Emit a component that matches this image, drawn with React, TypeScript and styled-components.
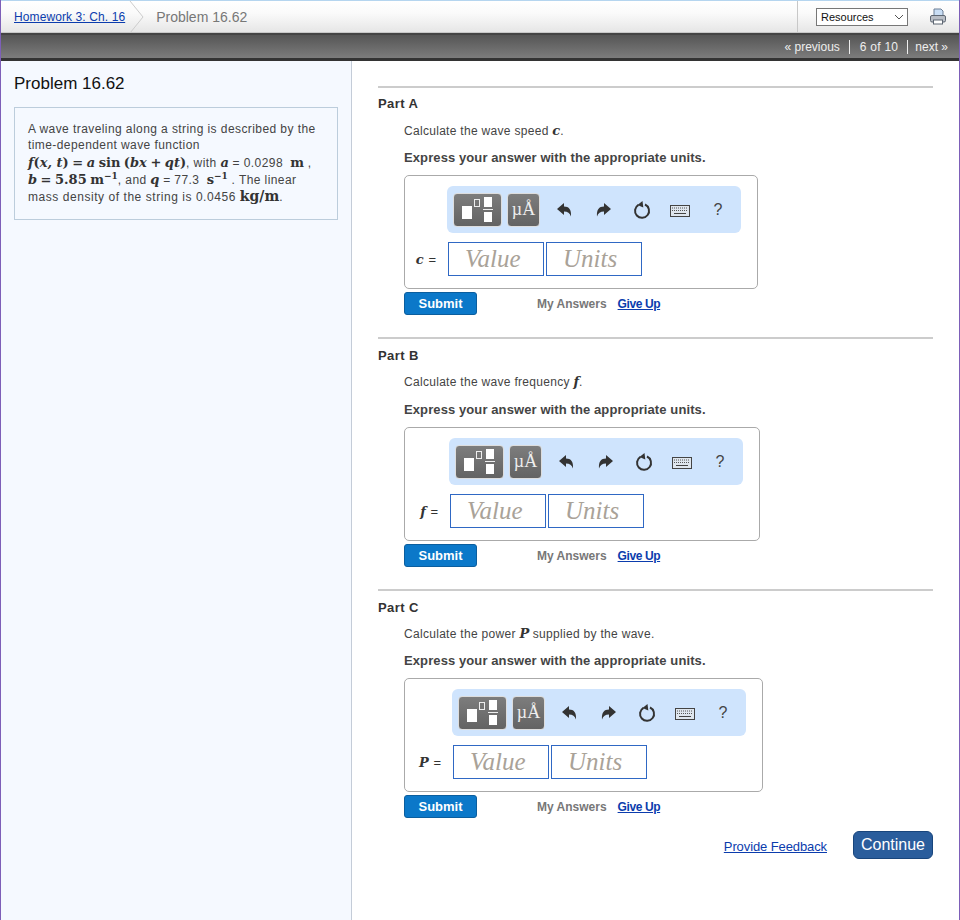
import styled, { createGlobalStyle } from 'styled-components';

const GlobalStyle = createGlobalStyle`
  html, body {
    margin: 0;
    padding: 0;
    background: #fff;
  }
  body {
    font-family: "Liberation Sans", Arial, sans-serif;
    font-size: 12px;
    color: #333;
  }
`;

const Page = styled.div`
  box-sizing: border-box;
  width: 960px;
  height: 920px;
  display: flex;
  flex-direction: column;
  border-left: 1px solid #7d5fb8;
  border-right: 1px solid #7d5fb8;
  overflow: hidden;
`;

const Header = styled.header`
  box-sizing: border-box;
  height: 33px;
  display: flex;
  align-items: stretch;
  border-top: 1px solid #b5d5ef;
  background: linear-gradient(#ffffff, #fafafa 40%, #e6e6e6);
  border-bottom: 1px solid #c8c8c8;
`;

const Crumbs = styled.div`
  flex: 1;
  display: flex;
  align-items: center;
  padding-left: 13px;
`;

const CrumbLink = styled.a`
  color: #0b3cad;
  text-decoration: underline;
  font-size: 12px;
  letter-spacing: 0.1px;
`;

const Chevron = styled.svg`
  width: 16px;
  height: 32px;
  margin-left: 4px;
`;

const CrumbCurrent = styled.span`
  margin-left: 11px;
  font-size: 14px;
  color: #777;
`;

const Tools = styled.div`
  width: 162px;
  display: flex;
  align-items: center;
  border-left: 1px solid #c8c8c8;
  padding-left: 18px;
  box-sizing: border-box;
`;

const ResourceSelect = styled.div`
  box-sizing: border-box;
  width: 92px;
  height: 18px;
  display: flex;
  align-items: center;
  justify-content: space-between;
  padding: 0 3px 0 4px;
  background: #fff;
  border: 1px solid #777;
  font-size: 11px;
  color: #111;
`;

const PrinterIcon = styled.svg`
  width: 18px;
  height: 18px;
  margin-left: 21px;
`;

const NavBar = styled.nav`
  box-sizing: border-box;
  height: 28px;
  display: flex;
  align-items: center;
  justify-content: flex-end;
  padding-right: 11px;
  background: linear-gradient(#555, #7c7c7c);
  border-top: 2px solid #444;
  border-bottom: 3px solid #333;
  color: #eee;
  font-size: 12px;
`;

const NavItem = styled.span<{ $divided?: boolean }>`
  padding: 0 9px 0 10px;
  line-height: 14px;
  border-left: ${(props) => (props.$divided ? '1px solid #eee' : 'none')};
  &:last-child {
    padding-right: 0;
    padding-left: 7px;
  }
`;

const NavCount = styled(NavItem)`
  padding-right: 9px;
  letter-spacing: 0.25px;
`;

const Body = styled.div`
  flex: 1;
  display: flex;
  min-height: 0;
`;

const Sidebar = styled.aside`
  box-sizing: border-box;
  width: 351px;
  padding: 13px 13px 0;
  background: #f5f9ff;
  border-right: 1px solid #c4ccd8;
`;

const SidebarTitle = styled.h1`
  margin: 0 0 13px;
  font-size: 17px;
  line-height: 20px;
  font-weight: 400;
  color: #111;
`;

const IntroBox = styled.div`
  box-sizing: border-box;
  width: 324px;
  height: 113px;
  padding: 13px 13px 0;
  border: 1px solid #bccddc;
  font-size: 12px;
  letter-spacing: 0.42px;
  color: #444;
`;

const IntroLine = styled.div<{ $compact?: boolean }>`
  white-space: nowrap;
  height: ${(props) => (props.$compact ? '16px' : '17px')};
  line-height: ${(props) => (props.$compact ? '16px' : '17px')};
`;

const FormulaLine = styled(IntroLine)`
  margin-top: 1px;
`;

const MassLine = styled(IntroLine)`
  letter-spacing: 0.55px;
`;

const Math = styled.span`
  font-family: "DejaVu Serif", "Liberation Serif", serif;
  font-weight: 700;
  font-size: 13px;
  letter-spacing: 0;
  word-spacing: -1px;
  color: #333;
`;

const BigUnit = styled(Math)`
  font-size: 14px;
`;

const MathVar = styled.i`
  font-family: "DejaVu Serif", "Liberation Serif", serif;
  font-weight: 700;
  font-size: 13px;
  letter-spacing: 0;
  color: #333;
`;

const Sup = styled.sup`
  font-size: 9px;
  line-height: 0;
`;

const Main = styled.main`
  flex: 1;
  box-sizing: border-box;
  padding: 25px 26px 0 26px;
`;

const Part = styled.section`
  border-top: 2px solid #ccc;
  padding-bottom: 22px;
`;

const PartTitle = styled.h2`
  margin: 8px 0 0;
  font-size: 13px;
  line-height: 16px;
  font-weight: 700;
  letter-spacing: 0.4px;
  color: #333;
  section + section & {
    margin: 9px 0 -1px;
  }
`;

const PartBody = styled.div`
  padding-left: 26px;
`;

const Prompt = styled.p<{ $tall?: boolean }>`
  margin: 11px 0 0;
  height: ${(props) => (props.$tall ? '17px' : '16px')};
  line-height: 16px;
  font-size: 12px;
  letter-spacing: 0.3px;
  color: #444;
`;

const Instruction = styled.p`
  margin: 11px 0 0;
  font-size: 13px;
  line-height: 16px;
  font-weight: 700;
  letter-spacing: 0.1px;
  color: #444;
`;

const AnswerBox = styled.div`
  box-sizing: border-box;
  margin-top: 9px;
  display: inline-grid;
  grid-template-columns: auto auto;
  column-gap: 12px;
  row-gap: 9px;
  align-items: center;
  padding: 10px 16px 12px 10px;
  height: 114px;
  border: 1px solid #aaa;
  border-radius: 5px;
  vertical-align: top;
`;

const Toolbar = styled.div`
  grid-column: 2;
  box-sizing: border-box;
  width: 294px;
  height: 47px;
  margin-left: -1px;
  display: flex;
  align-items: center;
  padding-left: 6px;
  background: #cfe4fd;
  border-radius: 6px;
`;

const ToolButton = styled.div<{ $wide?: boolean }>`
  box-sizing: border-box;
  width: ${(props) => (props.$wide ? '49px' : '33px')};
  height: 34px;
  margin-right: 5px;
  display: flex;
  align-items: center;
  justify-content: center;
  border: 1px solid #ddd;
  border-radius: 4px;
  background: linear-gradient(#7d7d7d, #636363);
  color: #eee;
  font-family: "Liberation Serif", serif;
  font-size: 18px;
`;

const ToolIcon = styled.svg`
  width: 38px;
  height: 20px;
  color: #333;
`;

const RedoIcon = styled(ToolIcon)`
  margin-left: 2px;
`;

const Help = styled.span`
  width: 38px;
  text-align: center;
  font-size: 16px;
  color: #444;
`;

const FieldLabel = styled.div<{ $width: number }>`
  width: ${(props) => props.$width}px;
  text-align: right;
  font-size: 13px;
  word-spacing: 1px;
  color: #333;
  white-space: nowrap;
`;

const FieldRow = styled.div`
  display: flex;
  gap: 2px;
`;

const Field = styled.div`
  box-sizing: border-box;
  width: 96px;
  height: 34px;
  padding-left: 16px;
  border: 1px solid #2f68c4;
  font-family: "Liberation Serif", serif;
  font-style: italic;
  font-size: 25px;
  line-height: 32px;
  color: #a9a298;
`;

const Actions = styled.div`
  margin-top: 3px;
  display: flex;
  align-items: center;
`;

const SubmitButton = styled.button`
  box-sizing: border-box;
  width: 73px;
  height: 23px;
  padding: 0;
  background: #0b78c9;
  border: 1px solid #0b5e9e;
  border-radius: 3px;
  color: #fff;
  font-family: inherit;
  font-size: 13px;
  font-weight: 700;
`;

const MyAnswers = styled.span`
  margin-left: 60px;
  font-size: 12px;
  font-weight: 700;
  color: #777;
`;

const GiveUp = styled.a`
  margin-left: 11px;
  font-size: 12px;
  font-weight: 700;
  letter-spacing: -0.4px;
  color: #0b3cad;
  text-decoration: underline;
`;

const Footer = styled.div`
  margin-top: -9px;
  display: flex;
  justify-content: flex-end;
  align-items: center;
  gap: 26px;
`;

const Feedback = styled.a`
  margin-top: 2px;
  font-size: 13px;
  letter-spacing: -0.1px;
  color: #0b3cad;
  text-decoration: underline;
`;

const ContinueButton = styled.button`
  box-sizing: border-box;
  width: 80px;
  height: 28px;
  padding: 0;
  background: #2a5d9c;
  border: 1px solid #18457c;
  border-radius: 6px;
  color: #fff;
  font-family: inherit;
  font-size: 16px;
`;

function Printer() {
  return (
    <PrinterIcon viewBox="0 0 18 18">
      <path d="M5 1h7l2 2v5H5z" fill="#c9def5" stroke="#6d7f96" />
      <rect x="1.5" y="7.5" width="15" height="6.5" rx="1.5" fill="#b9bec6" stroke="#5d6672" />
      <rect x="4.5" y="12" width="9" height="4" fill="#fff" stroke="#5d6672" />
    </PrinterIcon>
  );
}

function Template() {
  return (
    <svg width="31" height="25" viewBox="0 0 31 25">
      <rect x="0" y="9" width="10" height="13" fill="#fff" />
      <rect x="12.500" y="2.500" width="5" height="7" fill="none" stroke="#eee" />
      <rect x="22" y="0" width="8" height="10" fill="#fff" />
      <rect x="21" y="12" width="10" height="1" fill="#eee" />
      <rect x="22" y="15" width="8" height="10" fill="#fff" />
    </svg>
  );
}

function Undo() {
  return (
    <ToolIcon viewBox="0 0 38 20">
      <path d="M12 9l7-6v3.600c5 0 7.500 3 7 10-1.200-3.500-3.200-5-7-5V15z" fill="currentColor" />
    </ToolIcon>
  );
}

function Redo() {
  return (
    <RedoIcon viewBox="0 0 38 20">
      <path d="M26 9l-7-6v3.600c-5 0-7.500 3-7 10 1.200-3.500 3.200-5 7-5V15z" fill="currentColor" />
    </RedoIcon>
  );
}

function Reset() {
  return (
    <ToolIcon viewBox="0 0 38 20">
      <path d="M15.500 4.800a7 7 0 1 0 6.500-.3" fill="none" stroke="currentColor" strokeWidth="2" />
      <path d="M19.500 1l.8 6.500-5.800-2.500z" fill="currentColor" />
    </ToolIcon>
  );
}

function Keyboard() {
  return (
    <ToolIcon viewBox="0 0 38 20">
      <rect x="9.500" y="5.500" width="19" height="11" fill="#dfe6ee" stroke="#444" />
      <path d="M11 8h16M11 10.500h16" stroke="#555" strokeDasharray="1 1" />
      <path d="M13 13.500h12" stroke="#444" />
    </ToolIcon>
  );
}

interface AnswerPartProps {
  title: string;
  symbol: string;
  subject: string;
  tail: string;
  labelWidth: number;
  tall?: boolean;
}

function AnswerPart({ title, symbol, subject, tail, labelWidth, tall }: AnswerPartProps) {
  return (
    <Part>
      <PartTitle>{title}</PartTitle>
      <PartBody>
        <Prompt $tall={tall}>
          {subject} <MathVar>{symbol}</MathVar>
          {tail}
        </Prompt>
        <Instruction>Express your answer with the appropriate units.</Instruction>
        <AnswerBox>
          <Toolbar>
            <ToolButton $wide>
              <Template />
            </ToolButton>
            <ToolButton>µÅ</ToolButton>
            <Undo />
            <Redo />
            <Reset />
            <Keyboard />
            <Help>?</Help>
          </Toolbar>
          <FieldLabel $width={labelWidth}>
            <MathVar>{symbol}</MathVar> =
          </FieldLabel>
          <FieldRow>
            <Field>Value</Field>
            <Field>Units</Field>
          </FieldRow>
        </AnswerBox>
        <Actions>
          <SubmitButton>Submit</SubmitButton>
          <MyAnswers>My Answers</MyAnswers>
          <GiveUp href="#">Give Up</GiveUp>
        </Actions>
      </PartBody>
    </Part>
  );
}

export default function App() {
  return (
    <>
      <GlobalStyle />
      <Page>
        <Header>
          <Crumbs>
            <CrumbLink href="#">Homework 3: Ch. 16</CrumbLink>
            <Chevron viewBox="0 0 16 32">
              <path d="M1 0l13 16L1 32" fill="none" stroke="#ccc" />
            </Chevron>
            <CrumbCurrent>Problem 16.62</CrumbCurrent>
          </Crumbs>
          <Tools>
            <ResourceSelect>
              Resources
              <svg width="10" height="6" viewBox="0 0 10 6">
                <path d="M1 1l4 4 4-4" fill="none" stroke="#555" />
              </svg>
            </ResourceSelect>
            <Printer />
          </Tools>
        </Header>
        <NavBar>
          <NavItem>« previous</NavItem>
          <NavCount $divided>6 of 10</NavCount>
          <NavItem $divided>next »</NavItem>
        </NavBar>
        <Body>
          <Sidebar>
            <SidebarTitle>Problem 16.62</SidebarTitle>
            <IntroBox>
              <IntroLine $compact>A wave traveling along a string is described by the</IntroLine>
              <IntroLine $compact>time-dependent wave function</IntroLine>
              <FormulaLine>
                <MathVar>f</MathVar>
                <Math>(</Math>
                <MathVar>x, t</MathVar>
                <Math>) = </Math>
                <MathVar>a</MathVar>
                <Math> sin (</Math>
                <MathVar>bx</MathVar>
                <Math> + </Math>
                <MathVar>qt</MathVar>
                <Math>)</Math>, with <MathVar>a</MathVar> = 0.0298 <Math>&nbsp;m</Math> ,
              </FormulaLine>
              <IntroLine>
                <MathVar>b</MathVar>
                <Math>
                  {' = 5.85 m'}
                  <Sup>−1</Sup>
                </Math>
                , and <MathVar>q</MathVar> = 77.3 <Math>
                  &nbsp;s<Sup>−1</Sup>
                </Math> . The linear
              </IntroLine>
              <MassLine>
                mass density of the string is 0.0456 <BigUnit>kg/m</BigUnit>.
              </MassLine>
            </IntroBox>
          </Sidebar>
          <Main>
            <AnswerPart title="Part A" symbol="c" subject="Calculate the wave speed" tail="." labelWidth={21} />
            <AnswerPart title="Part B" symbol="f" subject="Calculate the wave frequency" tail="." labelWidth={23} tall />
            <AnswerPart title="Part C" symbol="P" subject="Calculate the power" tail=" supplied by the wave." labelWidth={26} />
            <Footer>
              <Feedback href="#">Provide Feedback</Feedback>
              <ContinueButton>Continue</ContinueButton>
            </Footer>
          </Main>
        </Body>
      </Page>
    </>
  );
}
